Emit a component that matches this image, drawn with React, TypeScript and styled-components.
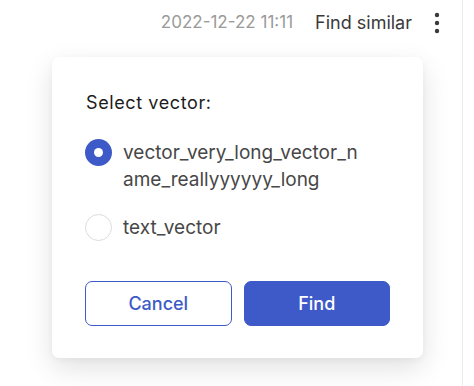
import styled, { createGlobalStyle } from "styled-components";
import { useState } from "react";

const GlobalStyle = createGlobalStyle`
  html, body {
    margin: 0;
    padding: 0;
    background: #ffffff;
  }
  body {
    font-family: Inter, "Noto Sans", "Liberation Sans", sans-serif;
    -webkit-font-smoothing: antialiased;
  }
`;

const BLUE = "#3d5ac8";

const vectors = ["vector_very_long_vector_name_reallyyyyyy_long", "text_vector"];

const App = () => {
  const [selected, setSelected] = useState(vectors[0]);

  return (
    <>
      <GlobalStyle />
      <StyledPage>
        <StyledMain>
          <StyledToolbar>
            <StyledDate>2022-12-22 11:11</StyledDate>
            <StyledLinkButton>Find similar</StyledLinkButton>
            <StyledKebab aria-label="More">
              <svg width="6" height="22" viewBox="0 0 6 22">
                <circle cx="3" cy="3" r="2.2" fill="#3a3a3a" />
                <circle cx="3" cy="11" r="2.2" fill="#3a3a3a" />
                <circle cx="3" cy="19" r="2.2" fill="#3a3a3a" />
              </svg>
            </StyledKebab>
          </StyledToolbar>
          <StyledPopover>
            <StyledTitle>Select vector:</StyledTitle>
            <StyledOptions>
              {vectors.map((name) => (
                <StyledOption key={name} onClick={() => setSelected(name)}>
                  <StyledRadio $checked={selected === name} />
                  <StyledOptionLabel>{name}</StyledOptionLabel>
                </StyledOption>
              ))}
            </StyledOptions>
            <StyledActions>
              <StyledButton $variant="outline">Cancel</StyledButton>
              <StyledButton $variant="primary">Find</StyledButton>
            </StyledActions>
          </StyledPopover>
        </StyledMain>
        <StyledSidePanel />
      </StyledPage>
    </>
  );
};

export default App;

const StyledPage = styled.div`
  display: flex;
  width: 474px;
  height: 386px;
  overflow: hidden;
`;

const StyledMain = styled.div`
  flex: 0 0 462px;
  display: flex;
  flex-direction: column;
`;

const StyledSidePanel = styled.div`
  flex: 1;
  border-left: 1px solid #ececec;
  background: #ffffff;
`;

const StyledToolbar = styled.div`
  height: 44px;
  display: flex;
  align-items: center;
  justify-content: flex-end;
  padding-right: 22px;
`;

const StyledDate = styled.span`
  font-size: 17px;
  color: #9a9a9a;
  margin-right: 22px;
`;

const StyledLinkButton = styled.button`
  border: none;
  background: none;
  padding: 0;
  font-family: inherit;
  font-size: 18px;
  color: #3a3a3a;
  margin-right: 22px;
`;

const StyledKebab = styled.button`
  border: none;
  background: none;
  padding: 0;
  display: flex;
  align-items: center;
  margin-top: 2px;
`;

const StyledPopover = styled.div`
  margin: 13px 0 0 52px;
  width: 371px;
  box-sizing: border-box;
  padding: 34px 33px 32px 33px;
  background: #ffffff;
  border-radius: 7px;
  box-shadow: 0 10px 28px rgba(0, 0, 0, 0.12), 0 2px 6px rgba(0, 0, 0, 0.04);
`;

const StyledTitle = styled.div`
  font-size: 18px;
  letter-spacing: 0.6px;
  color: #1c1c1c;
  line-height: 24px;
  margin-left: 1px;
`;

const StyledOptions = styled.div`
  display: flex;
  flex-direction: column;
  gap: 21px;
  margin-top: 24px;
`;

const StyledOption = styled.label`
  display: flex;
  align-items: flex-start;
  gap: 11px;
  cursor: pointer;
`;

const StyledRadio = styled.span<{ $checked: boolean }>`
  flex: 0 0 auto;
  width: 27px;
  height: 27px;
  box-sizing: border-box;
  border-radius: 50%;
  background: ${({ $checked }) => ($checked ? BLUE : "#ffffff")};
  border: ${({ $checked }) => ($checked ? `none` : `1px solid #dcdcdc`)};
  display: flex;
  align-items: center;
  justify-content: center;

  &::after {
    content: "";
    display: ${({ $checked }) => ($checked ? "block" : "none")};
    width: 9px;
    height: 9px;
    border-radius: 50%;
    background: #ffffff;
  }
`;

const StyledOptionLabel = styled.span`
  font-size: 19px;
  line-height: 27px;
  color: #474747;
  width: 244px;
  word-break: break-all;
`;

const StyledActions = styled.div`
  display: flex;
  gap: 12px;
  margin-top: 40px;
`;

const StyledButton = styled.button<{ $variant: "outline" | "primary" }>`
  width: 148px;
  height: 45px;
  box-sizing: border-box;
  border-radius: 7px;
  font-family: inherit;
  font-size: 18px;
  font-weight: 500;
  cursor: pointer;
  border: 1.5px solid ${BLUE};
  background: ${({ $variant }) => ($variant === "primary" ? BLUE : "#ffffff")};
  color: ${({ $variant }) => ($variant === "primary" ? "#ffffff" : BLUE)};
`;
